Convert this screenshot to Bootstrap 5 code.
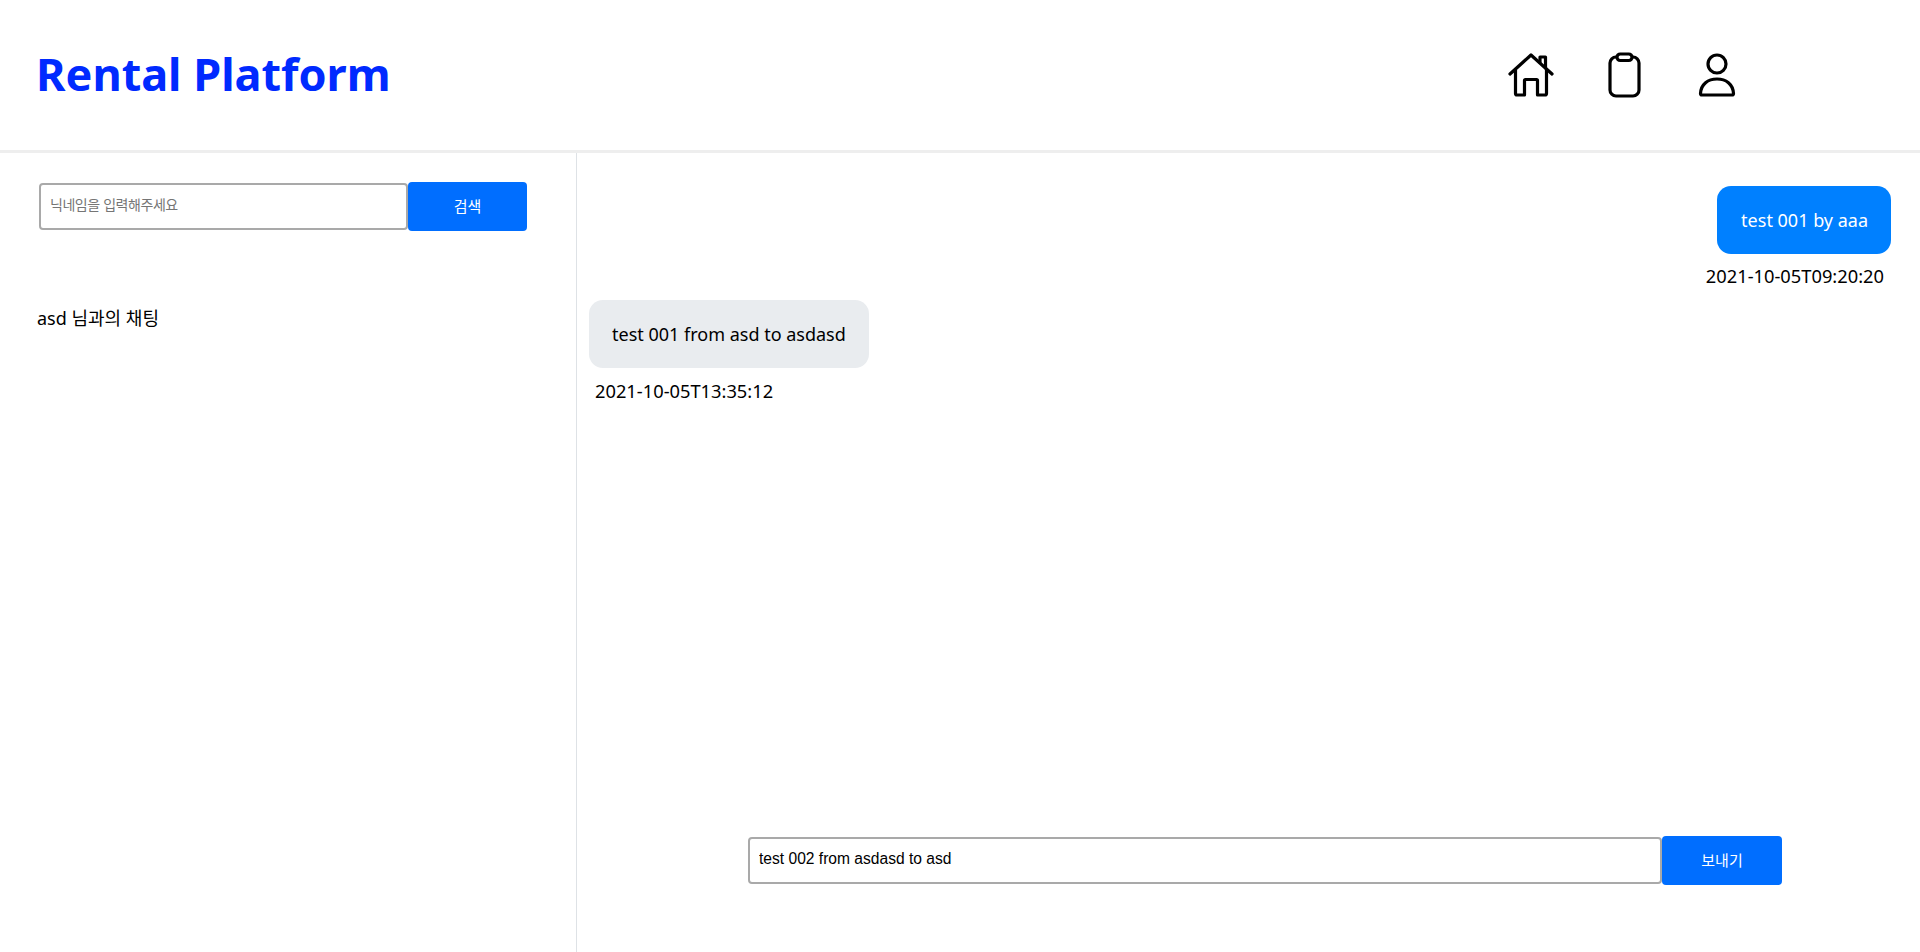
<!DOCTYPE html>
<html lang="ko">
<head>
<meta charset="utf-8">
<title>Rental Platform</title>
<link rel="stylesheet" href="https://cdn.jsdelivr.net/npm/bootstrap@5.3.0/dist/css/bootstrap.min.css">
<style>
html,body{height:100%;overflow:hidden}
body{font-family:"Noto Sans","Noto Sans CJK KR",sans-serif;color:#000;background:#fff;font-size:18px}
.app-top{height:153px;border-bottom:3px solid #eeeeee;padding-left:36px}
.brand-name{font-family:"Noto Sans",sans-serif;font-weight:700;font-size:45px;color:#002aff;line-height:1;margin:0 0 4px}
.top-icons{margin-left:auto;margin-right:183px;gap:56px}
.top-icons svg{display:block;fill:none;stroke:#000;stroke-width:3.200;stroke-linecap:round;stroke-linejoin:round}
.icon-house{margin-right:-2px}
.app-body{height:799px}
.side-pane{width:577px;flex:none;border-right:1px solid #dee2e6;padding:29px 0 0 39px}
.field-box{border:2px solid #a9a9a9;border-radius:4px;height:47px;box-shadow:none;font-family:"Liberation Sans","Noto Sans CJK KR",sans-serif;color:#000;background:#fff}
.field-box::placeholder{color:#757575}
.search-field{width:369px;flex:none;font-size:14px;letter-spacing:-.45px;padding:0 9px 3px}
.send-field{font-size:15.600px;padding:0 9px 3px}
.go-btn{background:#006eff;border:0;border-radius:4px;height:49px;padding:0;color:#fff;font-size:15px;font-family:"Noto Sans CJK KR",sans-serif;flex:none}
.go-btn:hover{background:#006eff}
.search-btn{width:119px}
.send-btn{width:120px}
.partner-line{margin:73px 0 0 -2px;line-height:28px}
.chat-pane{min-width:0;padding:33px 29px 67px 12px}
.chat-log{flex:1 1 auto}
.bubble-me,.bubble-you{border-radius:14px;height:68px;padding:0 23px;display:flex;align-items:center;line-height:1}
.bubble-me{background:#0080ff;color:#fff;padding-left:24px}
.bubble-you{background:#e9ecef;color:#000}
.stamp{line-height:24px;font-size:18.300px}
.stamp-me{margin:10px 7px 0 0}
.stamp-you{margin:11px 0 0 6px}
.msg-you{margin-top:12px}
.send-row{margin-left:159px;margin-right:109px}
</style>
</head>
<body>
<header class="app-top d-flex align-items-center">
  <h1 class="brand-name">Rental Platform</h1>
  <nav class="top-icons d-flex align-items-center">
    <svg class="icon-house" width="46" height="44" viewBox="0 0 46 44" aria-label="home"><path d="M2 21 23 2l21 19"/><path d="M32 9V4h5.500v11"/><path d="M7.500 17v23.500q0 1.500 1.500 1.500h7.500V27.500q0-1 1-1h11q1 0 1 1V42H37q1.500 0 1.500-1.500V17"/></svg>
    <svg width="33" height="46" viewBox="0 0 33 46" aria-label="list"><rect x="2" y="5" width="29" height="39" rx="6"/><rect x="9" y="2" width="15" height="6.500" rx="3.200" fill="#fff"/></svg>
    <svg width="40" height="44" viewBox="0 0 40 44" aria-label="user"><circle cx="20" cy="11" r="9"/><path d="M3.500 40.500C4 31 11 26 20 26s16 5 16.500 14.500q0 1.500-1.500 1.500H5q-1.500 0-1.500-1.500z"/></svg>
  </nav>
</header>
<main class="app-body d-flex">
  <aside class="side-pane">
    <form class="d-flex align-items-center">
      <input class="form-control field-box search-field" type="text" placeholder="닉네임을 입력해주세요">
      <button type="button" class="btn go-btn search-btn">검색</button>
    </form>
    <p class="partner-line">asd 님과의 채팅</p>
  </aside>
  <section class="chat-pane flex-grow-1 d-flex flex-column">
    <div class="chat-log d-flex flex-column">
      <div class="d-flex flex-column align-items-end">
        <div class="bubble-me">test 001 by aaa</div>
        <div class="stamp stamp-me">2021-10-05T09:20:20</div>
      </div>
      <div class="msg-you d-flex flex-column align-items-start">
        <div class="bubble-you">test 001 from asd to asdasd</div>
        <div class="stamp stamp-you">2021-10-05T13:35:12</div>
      </div>
    </div>
    <form class="send-row d-flex align-items-center">
      <input class="form-control field-box send-field flex-grow-1" type="text" value="test 002 from asdasd to asd">
      <button type="button" class="btn go-btn send-btn">보내기</button>
    </form>
  </section>
</main>
<script src="https://cdn.jsdelivr.net/npm/bootstrap@5.3.0/dist/js/bootstrap.bundle.min.js"></script>
</body>
</html>
